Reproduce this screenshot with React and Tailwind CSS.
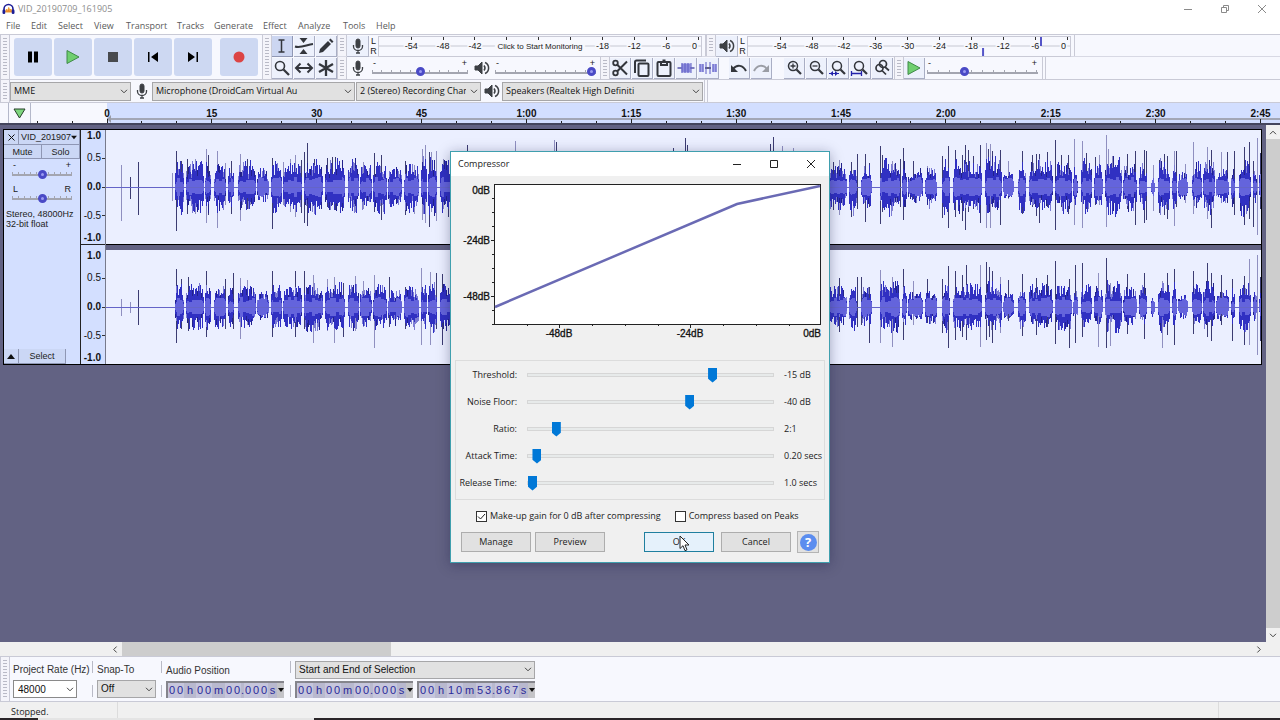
import React from "react";

const MENUS = [
  ["File", "w-[25px]"], ["Edit", "w-[27px]"], ["Select", "w-[36px]"], ["View", "w-[32px]"],
  ["Transport", "w-[51px]"], ["Tracks", "w-[37px]"], ["Generate", "w-[49px]"], ["Effect", "w-[35px]"],
  ["Analyze", "w-[45px]"], ["Tools", "w-[33px]"], ["Help", "w-[30px]"],
];

/* ---------- waveform data ---------- */

// [start, end, height above the axis, height below the axis]
const BURSTS = [
  [175, 184, 24, 25], [186, 204, 24, 25], [205, 211, 28, 27], [214, 226, 22, 24], [228, 234, 22, 22],
  [238, 256, 24, 22], [257, 269, 17, 14], [271, 282, 23, 24], [283, 302, 22, 23], [304, 323, 25, 26],
  [325, 345, 26, 24], [348, 359, 26, 24], [360, 372, 22, 22], [373, 387, 24, 24], [388, 402, 18, 19],
  [404, 419, 22, 25], [421, 427, 28, 26], [428, 437, 28, 28], [440, 456, 25, 26], [460, 490, 25, 24],
  [494, 530, 25, 24], [534, 570, 25, 24], [576, 620, 25, 24], [626, 700, 25, 24], [706, 760, 25, 24],
  [765, 820, 25, 24], [824, 847, 22, 21], [849, 857, 24, 26], [861, 872, 21, 20], [880, 900, 28, 27],
  [902, 907, 25, 22], [908, 923, 17, 15], [925, 937, 17, 20], [942, 950, 26, 27], [953, 982, 25, 25],
  [985, 1002, 28, 24], [1003, 1014, 15, 13], [1018, 1026, 23, 24], [1029, 1053, 25, 22],
  [1055, 1072, 24, 25], [1073, 1078, 20, 16], [1081, 1092, 27, 24], [1094, 1103, 22, 18],
  [1105, 1122, 28, 27], [1123, 1137, 21, 22], [1139, 1147, 22, 22], [1151, 1155, 12, 12],
  [1158, 1170, 26, 27], [1172, 1177, 26, 22], [1178, 1188, 14, 14], [1192, 1202, 25, 19],
  [1203, 1215, 28, 26], [1216, 1229, 17, 15], [1231, 1235, 22, 20], [1239, 1251, 25, 28],
  [1253, 1257, 20, 18], [1259, 1262, 20, 18],
];

// [x, up, down]
const PEAKS_LEFT = [
  [121, 22, 34], [130, 10, 12], [138, 25, 28], [172, 14, 14], [176, 36, 44], [181, 26, 20], [187, 28, 27],
  [195, 28, 27], [206, 38, 36], [208, 32, 28], [217, 36, 41], [225, 24, 18], [231, 26, 27], [240, 33, 34],
  [247, 28, 22], [250, 25, 18], [272, 29, 42], [283, 25, 18], [290, 28, 25], [295, 32, 30], [301, 27, 26],
  [304, 35, 36], [307, 44, 39], [314, 28, 27], [327, 29, 20], [332, 30, 18], [335, 30, 23], [355, 28, 25],
  [363, 25, 22], [374, 34, 25], [381, 32, 33], [405, 26, 28], [414, 22, 27], [422, 38, 33], [425, 42, 36],
  [429, 35, 40], [431, 35, 25], [436, 36, 34], [443, 28, 22], [448, 27, 30], [467, 42, 20], [515, 46, 20],
  [554, 47, 20], [556, 45, 20], [673, 39, 20], [685, 49, 20], [687, 42, 20], [770, 43, 20], [773, 50, 20],
  [782, 41, 20], [793, 39, 20], [833, 25, 23], [839, 27, 28], [851, 25, 30], [857, 33, 22], [865, 33, 35],
  [869, 24, 20], [880, 41, 37], [882, 32, 25], [892, 26, 24], [900, 28, 20], [903, 39, 33], [913, 26, 12],
  [927, 21, 18], [942, 31, 31], [948, 41, 41], [955, 37, 30], [962, 32, 34], [965, 42, 43], [968, 37, 25],
  [973, 31, 22], [980, 42, 36], [986, 44, 41], [988, 38, 22], [990, 43, 41], [992, 36, 20], [1000, 37, 38],
  [1008, 26, 12], [1022, 36, 27], [1032, 32, 20], [1036, 33, 29], [1039, 33, 36], [1047, 35, 20],
  [1055, 47, 43], [1061, 32, 20], [1068, 32, 27], [1074, 48, 38], [1082, 46, 41], [1086, 34, 22],
  [1095, 30, 18], [1099, 32, 18], [1106, 52, 40], [1108, 38, 25], [1112, 31, 26], [1127, 33, 22],
  [1135, 36, 38], [1144, 37, 36], [1146, 36, 33], [1153, 22, 24], [1159, 27, 26], [1164, 33, 28],
  [1167, 31, 32], [1174, 36, 39], [1176, 36, 20], [1185, 23, 16], [1193, 45, 27], [1207, 40, 32],
  [1211, 37, 41], [1221, 35, 12], [1227, 35, 16], [1234, 36, 28], [1244, 40, 38], [1249, 45, 32],
  [1253, 26, 40], [1257, 49, 48], [1260, 34, 22],
];

const PEAKS_RIGHT = [
  [121, 8, 9], [130, 5, 6], [138, 17, 18], [176, 38, 36], [181, 28, 22], [188, 30, 24], [206, 36, 30],
  [225, 28, 22], [233, 34, 22], [240, 29, 32], [247, 27, 18], [272, 36, 30], [295, 36, 30], [304, 36, 22],
  [313, 32, 36], [327, 28, 24], [334, 30, 36], [343, 24, 30], [355, 31, 24], [363, 26, 20], [374, 32, 41],
  [389, 30, 20], [405, 20, 22], [421, 39, 38], [430, 35, 38], [436, 34, 22], [442, 33, 38], [839, 29, 25],
  [857, 30, 20], [861, 30, 18], [869, 20, 36], [880, 37, 36], [892, 30, 40], [903, 38, 33], [913, 26, 18],
  [927, 28, 16], [942, 28, 26], [948, 41, 41], [955, 36, 33], [962, 32, 30], [966, 42, 33], [980, 42, 40],
  [986, 45, 33], [989, 40, 30], [992, 36, 36], [1000, 30, 26], [1008, 27, 14], [1022, 33, 29],
  [1036, 29, 28], [1047, 32, 20], [1055, 46, 37], [1069, 28, 41], [1075, 42, 36], [1082, 44, 30],
  [1098, 34, 40], [1106, 49, 41], [1110, 24, 39], [1127, 33, 27], [1144, 34, 32], [1162, 26, 41],
  [1167, 34, 28], [1174, 38, 38], [1193, 36, 27], [1207, 44, 30], [1211, 34, 34], [1221, 32, 18],
  [1232, 28, 34], [1244, 31, 38], [1249, 48, 38], [1257, 52, 48], [1260, 30, 34],
];

function noise(n) {
  const v = Math.sin(n * 12.9898) * 43758.5453;
  return v - Math.floor(v);
}

function buildWave(peaks, seed, gain) {
  const layers = { body: "", navy: "", pale: "", core: "", peak: "", peakPale: "" };
  const bar = (x, up, down) => `M${x}.5 ${57 - Math.round(up)}V${57 + Math.round(down)}`;
  BURSTS.forEach(([a, b, up, down]) => {
    for (let x = a; x < b; x += 1) {
      const edge = Math.min(1, 0.6 + Math.min(x - a, b - 1 - x) * 0.3);
      const u = up * gain * edge * (0.5 + 0.62 * noise(x * 1.7 + seed));
      const d = down * gain * edge * (0.5 + 0.62 * noise(x * 2.3 + seed + 9));
      const pick = noise(x * 3.1 + seed + 4);
      layers[pick < 0.66 ? "body" : pick < 0.8 ? "navy" : "pale"] += bar(x, u, d);
      if (pick >= 0.66) layers.body += bar(x, u * 0.66, d * 0.66);
      const c = edge * (5 + 5 * noise(Math.floor(x / 3) + seed));
      layers.core += bar(x, Math.min(c, u), Math.min(c, d));
    }
  });
  peaks.forEach(([x, up, down], i) => {
    layers[noise(i + seed) < 0.55 ? "peak" : "peakPale"] += bar(x, up, down);
  });
  return layers;
}

const CHANNELS = [buildWave(PEAKS_LEFT, 3, 1), buildWave(PEAKS_RIGHT, 21, 0.88)];

function Wave({ data, label }) {
  return (
    <svg viewBox="106 0 1155 114" preserveAspectRatio="none" className="block h-[114px] w-full bg-[#ebefff]" role="img" aria-label={label} fill="none" shapeRendering="crispEdges">
      <path d={data.peakPale} stroke="#8f8fc0" />
      <path d={data.peak} stroke="#3c3c72" />
      <path d={data.pale} stroke="#7c7cd4" />
      <path d={data.navy} stroke="#22228c" />
      <path d={data.body} stroke="#3030c2" />
      <path d={data.core} stroke="#6464dc" />
      <path d="M105 57.500H1262" stroke="#6464c8" />
    </svg>
  );
}

/* ---------- icons ---------- */

const Mic = () => (
  <svg viewBox="0 0 12 16" className="h-4 w-3 shrink-0" fill="none" stroke="#3d4045">
    <rect x="4" y="1" width="4" height="9" rx="2" fill="#3d4045" />
    <path d="M1.500 7v1.500a4.500 4 0 0 0 9 0V7M6 12.500v2.500M4 15h4" strokeWidth="1.300" />
  </svg>
);
const Speaker = () => (
  <svg viewBox="0 0 16 14" className="h-[14px] w-4 shrink-0" fill="none" stroke="#3d4045">
    <path d="M1 5h3l4-4v12L4 9H1z" fill="#3d4045" />
    <path d="M10 4.500a4 4 0 0 1 0 5M11 1.500a6 6 0 0 1 0 11" strokeWidth="1.500" />
  </svg>
);
const Chevron = ({ className = "" }) => (
  <svg viewBox="0 0 8 5" className={`h-[5px] w-2 shrink-0 ${className}`} fill="none" stroke="#444">
    <path d="M1 .8l3 3 3-3" />
  </svg>
);
const I = ({ children }) => (
  <svg viewBox="0 0 20 20" className="size-5 shrink-0" fill="none" stroke="#33363c" strokeWidth="2">{children}</svg>
);
const Play = () => <path d="M4 3.500v13L16 10z" fill="#6fcf6f" stroke="#3f8a48" strokeWidth="1" />;
const lens = (
  <>
    <circle cx="9" cy="8" r="4.500" strokeWidth="1.500" />
    <path d="M12.500 11.500L17 16" strokeWidth="2.200" />
  </>
);

const EDIT_TOOLS = [
  ["Cut", <><circle cx="5.500" cy="5" r="2.300" strokeWidth="1.800" /><circle cx="5.500" cy="15" r="2.300" strokeWidth="1.800" /><path d="M7 6.500L17 16.500M7 13.500L17 3.500" /></>],
  ["Copy", <><path d="M14 2.500H4.500A1.500 1.500 0 0 0 3 4v11" /><rect x="6.500" y="5.500" width="10" height="12.500" rx="1" /></>],
  ["Paste", <><rect x="3.500" y="4" width="13" height="14" rx="1" /><path d="M7 4h6v3H7zM8.500 2.500h3" /></>],
  ["Trim audio", <g><path d="M1.500 10h17" stroke="#55a" strokeWidth="1.500" /><rect x="5.500" y="5.500" width="9" height="9" fill="#8c8cdc" stroke="none" /><path d="M6 5v10M9 5v10M12 5v10M15 5v10" stroke="#5a5ac4" strokeWidth="1" /></g>],
  ["Silence audio", <g><path d="M7 10h6" stroke="#335" strokeWidth="1.500" /><path d="M1.500 6h4v8h-4zM14.500 6h4v8h-4z" fill="#a4a4e6" stroke="none" /><path d="M2 6v8M5 6v8M8 4v12M12 4v12M15 6v8M18 6v8" stroke="#5a5ac4" strokeWidth="1" /></g>],
];
const HISTORY_TOOLS = [
  ["Undo", <><path d="M4 11c4-5 10-4 13 2" /><path d="M2 7v7h7z" fill="#33363c" stroke="none" /></>],
  ["Redo", <g stroke="#9a9da5"><path d="M16 11c-4-5-10-4-13 2" /><path d="M18 7v7h-7z" fill="#9a9da5" stroke="none" /></g>],
];
const ZOOM_TOOLS = [
  ["Zoom in", <>{lens}<path d="M6.500 8h5M9 5.500v5" strokeWidth="1.300" /></>],
  ["Zoom out", <>{lens}<path d="M6.500 8h5" strokeWidth="1.300" /></>],
  ["Fit selection", <>{lens}<path d="M1 15.500h10" stroke="#22a" strokeWidth="1" /><path d="M5 13v5l-3-2.500zM7 13v5l3-2.500z" fill="#22a" stroke="none" /></>],
  ["Fit project", <>{lens}<path d="M1.500 13v5M11.500 13v5M2 15.500h9" stroke="#22a" strokeWidth="1.300" /></>],
  ["Zoom toggle", <g strokeWidth="1.700"><circle cx="11" cy="6" r="3.500" /><circle cx="7.500" cy="10" r="3.500" /><path d="M13 9l4 3.500M10 12.500l4 4" /></g>],
];
const MODE_TOOLS = [
  ["Selection tool", <path d="M6.500 4h6M9.500 4v12M6.500 16h6" strokeWidth="1.500" />],
  ["Envelope tool", <><path d="M1 10.500c6 2 12-2 18-2.500" strokeWidth="2" /><path d="M5.500 2h8L9.500 7zM5.500 18h8L9.500 13z" fill="#33363c" stroke="none" /></>],
  ["Draw tool", <path d="M3 17l1-4 8-8 3 3-8 8zM13 4l1.500-1.500 3 3L16 7z" fill="#33363c" stroke="none" />],
  ["Zoom tool", <><circle cx="8" cy="8" r="4.500" strokeWidth="1.600" /><path d="M11.500 11.500L17 17" strokeWidth="2.300" /></>],
  ["Time shift tool", <path d="M2 10h16M6.500 5.500L2 10l4.500 4.500M13.500 5.500L18 10l-4.500 4.500" />],
  ["Multi tool", <path d="M10 2v16M3 6l14 8M17 6L3 14" strokeWidth="2.300" />],
];
const TRANSPORT = [
  ["Pause", <path d="M5 4.500h4v11H5zM11 4.500h4v11h-4z" fill="#000" stroke="none" />],
  ["Play", <Play />],
  ["Stop", <path d="M5 5h10v10H5z" fill="#484a4e" stroke="none" />],
  ["Skip to start", <path d="M5 5h1.500v10H5zM15 5v10l-7-5z" fill="#000" stroke="none" />],
  ["Skip to end", <path d="M13.500 5H15v10h-1.500zM5 5v10l7-5z" fill="#000" stroke="none" />],
  ["Record", <circle cx="10" cy="10" r="5.500" fill="#dc4444" stroke="none" />],
];

/* ---------- small parts ---------- */

const Grip = () => (
  <div className="flex w-[10px] shrink-0 items-center justify-center self-stretch border-r border-l border-[#c9cad6] bg-[#f4f4fa] py-[3px]">
    <div className="h-full w-1 bg-[repeating-linear-gradient(to_bottom,#b9bac6_0px,#b9bac6_1px,transparent_1px,transparent_3px)]" />
  </div>
);

function ToolButton({ label, pressed, children }) {
  return (
    <button
      type="button"
      aria-label={label}
      className={`flex h-[21px] w-[21px] shrink-0 items-center justify-center border-r border-b ${pressed ? "border-[#8f97b4] bg-[#ccd6f1]" : "border-[#a9aec4] bg-[#edf1fc]"}`}
    >
      <I>{children}</I>
    </button>
  );
}

const ToolGroup = ({ tools }) => (
  <div className="flex gap-px pr-px">
    {tools.map(([n, d]) => <ToolButton key={n} label={n}>{d}</ToolButton>)}
  </div>
);

function Select({ label, value, className }) {
  return (
    <div className={`grid items-center ${className}`}>
      <select aria-label={label} className="col-start-1 row-start-1 h-full w-full min-w-0 appearance-none overflow-hidden border border-[#a6a6a8] bg-[#e1e1e1] pr-[14px] pl-[3px] text-[#111] outline-none">
        <option>{value}</option>
      </select>
      <Chevron className="pointer-events-none col-start-1 row-start-1 mr-[3px] justify-self-end" />
    </div>
  );
}

const KNOB =
  "[&::-webkit-slider-thumb]:size-[9px] [&::-webkit-slider-thumb]:appearance-none [&::-webkit-slider-thumb]:rounded-full [&::-webkit-slider-thumb]:border-[3px] [&::-webkit-slider-thumb]:border-[#4a4ac6] [&::-webkit-slider-thumb]:bg-[#9a9af0]";

function MiniSlider({ label, value, low = "-", high = "+", className }) {
  return (
    <div className={`flex shrink-0 flex-col ${className}`}>
      <div className="flex h-[7px] justify-between px-px font-['Liberation_Sans',sans-serif] text-[9px] leading-[7px] text-[#222]">
        <span>{low}</span>
        <span>{high}</span>
      </div>
      <div className="grid items-center">
        <svg className="col-start-1 row-start-1 h-[10px] w-full" stroke="#a3a5b0" shapeRendering="crispEdges">
          <line x1="0" y1="6" x2="100%" y2="6" strokeWidth="2" />
          {[0, 10, 20, 30, 40, 50, 60, 70, 80, 90, 99].map((p) => (
            <line key={p} x1={`${p}%`} x2={`${p}%`} y1="3" y2="5" />
          ))}
        </svg>
        <input type="range" aria-label={label} min="0" max="100" defaultValue={value} className={`col-start-1 row-start-1 h-[9px] w-full appearance-none bg-transparent ${KNOB}`} />
      </div>
    </div>
  );
}

function Meter({ icon, label, hint, marks, className }) {
  const steps = ["-54", "-48", "-42", "-36", "-30", "-24", "-18", "-12", "-6", "0"];
  return (
    <div className={`flex h-[22px] shrink-0 items-center ${className}`}>
      <button type="button" aria-label={label} className="flex h-[21px] w-[22px] shrink-0 items-center justify-center border-r border-b border-[#b4b8ca] bg-[#edf1fc]">{icon}</button>
      <div className="flex w-[9px] shrink-0 flex-col items-center font-['Liberation_Sans',sans-serif] text-[9px] leading-[10px] text-[#222]">
        <span>L</span>
        <span>R</span>
      </div>
      <svg className="h-[21px] min-w-0 flex-1 border border-[#c9cad6] font-['Liberation_Sans',sans-serif] text-[9px]" role="img" aria-label={`${label} level`}>
        <line x1="0" y1="9" x2="100%" y2="9" stroke="#c6c8d2" />
        {steps.map((s, i) => {
          const x = `${10 + i * 9.9}%`;
          const hidden = hint && i > 2 && i < 6;
          return (
            <g key={s}>
              <line x1={x} x2={x} y1="0" y2="3" stroke="#333" shapeRendering="crispEdges" />
              {!hidden && (
                <text x={i === 9 ? "98%" : x} y="12" textAnchor="middle" fill="#222" stroke="#f7f8fd" strokeWidth="3" paintOrder="stroke">{s}</text>
              )}
            </g>
          );
        })}
        {hint && <text x="50%" y="12" textAnchor="middle" className="text-[8px]" fill="#222" stroke="#f7f8fd" strokeWidth="6" paintOrder="stroke">{hint}</text>}
        {marks && (
          <>
            <line x1="91%" x2="91%" y1="0" y2="9" stroke="#5555c8" strokeWidth="2" />
            <line x1="73%" x2="73%" y1="11" y2="20" stroke="#5555c8" strokeWidth="2" />
          </>
        )}
      </svg>
    </div>
  );
}

function TimeBox({ label, value }) {
  const width = (c, i) => {
    if (c === "h") return "w-3";
    if (c === "m") return "w-[13px]";
    if (c === ".") return "w-[3px]";
    return i === 12 ? "w-[9px]" : "w-2";
  };
  return (
    <div role="group" aria-label={label} className="flex h-[17px] w-[118px] items-stretch border-t-2 border-l-2 border-[#85858c] bg-[#c4c4c8] font-['Liberation_Sans',sans-serif] text-[11px] leading-[14px] text-[#2a2a9a]">
      {value.split("").map((c, i) => (
        <span key={i} className={`text-center ${width(c, i)} ${/\d/.test(c) ? "bg-[#c6c6dc]" : "bg-[#b9b9cf]"}`}>{c}</span>
      ))}
      <button type="button" aria-label={`${label} format`} className="flex flex-1 items-center justify-center">
        <svg viewBox="0 0 6 4" className="h-1 w-[6px]"><path d="M0 0h6L3 4z" fill="#111" /></svg>
      </button>
    </div>
  );
}

/* ---------- page sections ---------- */

function TitleBar() {
  return (
    <header className="bg-white">
      <div className="flex h-[18px] items-center pl-[2px] text-[#8d8d8d]">
        <svg viewBox="0 0 13 12" className="mr-[3px] h-3 w-[13px]" fill="none">
          <path d="M2 9V6a4.500 4.500 0 0 1 9 0v3" stroke="#1d1d96" strokeWidth="1.600" />
          <path d="M3.500 9l1-3 1.200 2 1-3.500 1.200 3.500 1-2 1 3z" fill="#e9742a" stroke="#f0a030" />
          <rect x=".5" y="6.500" width="2.800" height="4.500" rx="1.200" fill="#1d1d96" />
          <rect x="9.700" y="6.500" width="2.800" height="4.500" rx="1.200" fill="#1d1d96" />
        </svg>
        <h1>VID_20190709_161905</h1>
        <div className="ml-auto flex">
          {[["Minimize", "M1 5.500h8"], ["Restore", "M1.500 3.500h5v5h-5zM3.500 3.500v-2h5v5h-2"], ["Close", "M1 1l8 8M9 1L1 9"]].map(([n, d]) => (
            <button key={n} type="button" aria-label={n} className="flex w-[37px] items-center justify-center">
              <svg viewBox="0 0 10 10" className="size-[10px]" fill="none" stroke="#8a8a8a"><path d={d} /></svg>
            </button>
          ))}
        </div>
      </div>
      <nav className="flex h-4 items-center pl-[6px] leading-[14px] text-[#5a5a5a]">
        {MENUS.map(([m, w]) => (
          <button key={m} type="button" className={`text-left ${w}`}>{m}</button>
        ))}
      </nav>
    </header>
  );
}

function Toolbars() {
  return (
    <div className="flex h-[45px] border-t border-[#c9cad6]">
      <Grip />
      <div className="flex items-center gap-[2px] pr-1 pl-1">
        {TRANSPORT.map(([n, d], i) => (
          <button key={n} type="button" aria-label={n} className={`flex size-[38px] items-center justify-center rounded-[3px] bg-[#cdd8f2] ${i === 5 ? "ml-[6px]" : ""}`}>
            <I>{d}</I>
          </button>
        ))}
      </div>
      <Grip />
      <div className="grid grid-cols-3 content-center gap-px">
        {MODE_TOOLS.map(([n, d], i) => (
          <ToolButton key={n} label={n} pressed={i === 0}>{d}</ToolButton>
        ))}
      </div>
      <div className="flex min-w-0 flex-1 flex-col">
        <div className="flex h-[22px] border-b border-[#d8d9e4]">
          <Grip />
          <Meter icon={<Mic />} label="Recording meter" hint="Click to Start Monitoring" className="w-[355px]" />
          <div className="w-1 border-r border-[#c9cad6]" />
          <Grip />
          <Meter icon={<Speaker />} label="Playback meter" marks className="w-[355px]" />
          <div className="w-1 border-r border-[#c9cad6]" />
        </div>
        <div className="flex h-[22px] items-center">
          <Grip />
          <div className="flex w-[22px] justify-center"><Mic /></div>
          <MiniSlider label="Recording volume" value={51} className="ml-[3px] w-[96px]" />
          <div className="flex w-[27px] justify-center"><Speaker /></div>
          <MiniSlider label="Playback volume" value={100} className="w-[101px]" />
          <div className="w-1" />
          <Grip />
          <ToolGroup tools={EDIT_TOOLS} />
          <div className="w-[9px]" />
          <ToolGroup tools={HISTORY_TOOLS} />
          <div className="w-[11px]" />
          <ToolGroup tools={ZOOM_TOOLS} />
          <Grip />
          <ToolButton label="Play at speed"><Play /></ToolButton>
          <MiniSlider label="Playback speed" value={32} className="mr-1 ml-[2px] w-[111px]" />
          <div className="h-full w-1 border-r border-l border-[#c9cad6]" />
        </div>
      </div>
    </div>
  );
}

function DeviceBar() {
  return (
    <div className="flex h-6 items-center border-y border-[#c9cad6]">
      <Grip />
      <Select label="Audio host" value="MME" className="h-[19px] w-[121px]" />
      <div className="flex w-[21px] justify-center"><Mic /></div>
      <Select label="Recording device" value="Microphone (DroidCam Virtual Au" className="h-[19px] w-[203px]" />
      <Select label="Recording channels" value="2 (Stereo) Recording Chan" className="ml-px h-[19px] w-[125px]" />
      <div className="flex w-[21px] justify-center"><Speaker /></div>
      <Select label="Playback device" value="Speakers (Realtek High Definiti" className="h-[19px] w-[201px]" />
      <div className="ml-px h-full w-1 border-r border-l border-[#c9cad6]" />
    </div>
  );
}

function Timeline() {
  const labels = ["0", "15", "30", "45", "1:00", "1:15", "1:30", "1:45", "2:00", "2:15", "2:30", "2:45"];
  const ticks = Array.from({ length: 34 }, (_, i) => i);
  return (
    <div className="flex h-[22px] border-b-2 border-[#44455c]">
      <div className="w-2" />
      <button type="button" aria-label="Pin play head" className="flex w-[23px] items-center justify-center border-x border-[#b4b8ca]">
        <svg viewBox="0 0 13 11" className="h-[11px] w-[13px]"><path d="M1 1h11L6.500 10z" fill="#7ed67e" stroke="#26402a" /></svg>
      </button>
      <svg className="h-5 w-[76px]" stroke="#222" shapeRendering="crispEdges"><path d="M6.500 18v3M41.500 18v3" /></svg>
      <svg className="h-5 min-w-0 flex-1 overflow-visible bg-[#d2deff] font-['Liberation_Sans',sans-serif] text-[10px] font-bold" role="img" aria-label="Timeline">
        <rect x="0" y="15" width="100%" height="2" fill="#a2a6b6" />
        <path d="M0 16l4-4v8" fill="#9a9ca8" />
        {ticks.map((i) => {
          const x = `${i * 2.98}%`;
          return <line key={i} x1={x} x2={x} y1={i % 3 ? 18 : 16} y2="20" stroke="#222" shapeRendering="crispEdges" />;
        })}
        {labels.map((t, i) => (
          <text key={t} x={`${i * 8.94}%`} y="14" textAnchor="middle" fill="#111">{t}</text>
        ))}
      </svg>
    </div>
  );
}

function LevelRuler() {
  return (
    <div className="grid h-[114px] grid-rows-[12px_32px_26px_31px_13px] items-center text-[10px] leading-[12px] text-[#111]">
      {["1.0", "0.5", "0.0", "-0.5", "-1.0"].map((v) => (
        <div key={v} className="flex items-center justify-end gap-px">
          <span className={v.endsWith("5") ? "" : "font-bold"}>{v}</span>
          <i className={`h-px w-[3px] ${v.endsWith("1.0") ? "" : "bg-[#333]"}`} />
        </div>
      ))}
    </div>
  );
}

function Track() {
  const raised = "border-r border-b border-[#8f97b4] bg-[#cbd7f5]";
  return (
    <section aria-label="VID_20190709_161905" className="mt-1 mr-1 ml-[3px] flex h-[236px] border border-black bg-[#d3dfff]">
      <div className="flex w-[77px] shrink-0 flex-col border-r border-[#222] font-['Liberation_Sans',sans-serif] text-[9px] text-[#222]">
        <div className="flex h-[15px]">
          <button type="button" aria-label="Close track" className={`flex w-[15px] items-center justify-center ${raised}`}>
            <svg viewBox="0 0 7 7" className="size-[7px]" stroke="#111"><path d="M.5.5l6 6M6.500.5l-6 6" /></svg>
          </button>
          <button type="button" className={`flex min-w-0 flex-1 items-center justify-between px-[2px] ${raised}`}>
            VID_201907
            <svg viewBox="0 0 8 5" className="h-[5px] w-2"><path d="M0 0h8L4 5z" fill="#111" /></svg>
          </button>
        </div>
        <div className="grid h-[14px] grid-cols-2">
          <button type="button" className={raised}>Mute</button>
          <button type="button" className={raised}>Solo</button>
        </div>
        <div className="flex flex-col gap-[7px] px-2 pt-[3px]">
          <MiniSlider label="Gain" value={50} className="w-[60px]" />
          <MiniSlider label="Pan" value={50} low="L" high="R" className="w-[60px]" />
        </div>
        <p className="pt-[6px] pl-[2px] leading-[10px] whitespace-nowrap">Stereo, 48000Hz<br />32-bit float</p>
        <div className="mt-auto flex h-[15px]">
          <button type="button" aria-label="Collapse" className={`flex w-[15px] items-center justify-center ${raised}`}>
            <svg viewBox="0 0 8 5" className="h-[5px] w-2"><path d="M0 5h8L4 0z" fill="#111" /></svg>
          </button>
          <button type="button" className={`w-[47px] ${raised}`}>Select</button>
        </div>
      </div>
      <div className="flex w-6 shrink-0 flex-col justify-between font-['Liberation_Sans',sans-serif]">
        <div className="border-b border-[#222]"><LevelRuler /></div>
        <LevelRuler />
      </div>
      <div className="flex min-w-0 flex-1 flex-col justify-between border-l border-[#777a8c] bg-[#626283]">
        <div className="border-b border-black"><Wave data={CHANNELS[0]} label="Left channel" /></div>
        <Wave data={CHANNELS[1]} label="Right channel" />
      </div>
    </section>
  );
}

const PARAMS = [
  ["Threshold:", 76.3, "-15 dB"], ["Noise Floor:", 66.6, "-40 dB"], ["Ratio:", 10.1, "2:1"],
  ["Attack Time:", 1.9, "0.20 secs"], ["Release Time:", 0, "1.0 secs"],
];

function CheckBox({ label, checked }) {
  return (
    <label className="flex items-center gap-[3px]">
      <span className="grid items-center justify-items-center">
        <input type="checkbox" defaultChecked={checked} className="peer col-start-1 row-start-1 size-[11px] appearance-none border border-[#333] bg-white" />
        <svg viewBox="0 0 9 9" className="pointer-events-none invisible col-start-1 row-start-1 size-[9px] peer-checked:visible" fill="none" stroke="#222"><path d="M1 4.500l2.500 2.500L8 2" /></svg>
      </span>
      {label}
    </label>
  );
}

function CompressorDialog() {
  const btn = "h-5 w-[70px] border border-[#adadad] bg-[#e1e1e1]";
  return (
    <div role="dialog" aria-labelledby="dlg-title" className="absolute top-[151px] left-1/2 w-[380px] -translate-x-1/2 border border-[#3f9fae] bg-[#f0f0f0] pb-[9px] text-[#222] shadow-[0_2px_12px_rgba(20,20,60,0.35)]">
      <div className="flex h-6 items-center bg-white pl-[7px]">
        <h2 id="dlg-title">Compressor</h2>
        <div className="ml-auto flex">
          {[["Minimize", "M1 5.500h8"], ["Maximize", "M1.500 1.500h7v7h-7z"], ["Close", "M1 1l8 8M9 1L1 9"]].map(([n, d]) => (
            <button key={n} type="button" aria-label={n} className="flex w-[37px] items-center justify-center">
              <svg viewBox="0 0 10 10" className="size-[10px]" fill="none" stroke="#222"><path d={d} /></svg>
            </button>
          ))}
        </div>
      </div>
      <svg viewBox="0 0 378 184" className="block h-[184px] w-full font-['Liberation_Sans',sans-serif] text-[10px]" role="img" aria-label="Compression curve">
        <rect x="43.500" y="8.500" width="326" height="140" fill="#fff" stroke="#222" />
        <path d="M44 131L286 28L369 10" fill="none" stroke="#6a6ab4" strokeWidth="2.500" />
        <g stroke="#222" shapeRendering="crispEdges">
          {[22, 36, 50, 64, 78, 92, 106, 120, 134, 148].map((y) => <path key={y} d={`M${y === 64 || y === 120 ? 40 : 41} ${y}.5h3`} />)}
          {[76, 108, 141, 174, 207, 239, 272, 305, 338].map((x) => <path key={x} d={`M${x}.5 148v${x === 108 || x === 239 ? 4 : 2}`} />)}
        </g>
        <g fill="#111" stroke="#111" strokeWidth=".3">
          <g textAnchor="end"><text x="39" y="18">0dB</text><text x="39" y="68">-24dB</text><text x="39" y="124">-48dB</text><text x="370" y="161">0dB</text></g>
          <g textAnchor="middle"><text x="108" y="161">-48dB</text><text x="239" y="161">-24dB</text></g>
        </g>
      </svg>
      <div className="mx-1 flex flex-col border border-[#dcdcdc] pb-[3px]">
        {PARAMS.map(([name, v, out]) => (
          <div key={name} className="grid h-[27px] grid-cols-[61px_247px_1fr] items-center gap-x-[10px]">
            <label htmlFor={name} className="text-right whitespace-nowrap">{name}</label>
            <input
              id={name} type="range" min="0" max="100" step="0.1" defaultValue={v}
              className="h-[15px] w-full appearance-none bg-transparent [&::-webkit-slider-runnable-track]:h-1 [&::-webkit-slider-runnable-track]:border [&::-webkit-slider-runnable-track]:border-[#d6d6d6] [&::-webkit-slider-runnable-track]:bg-[#e7eaea] [&::-webkit-slider-thumb]:-mt-[6px] [&::-webkit-slider-thumb]:h-[15px] [&::-webkit-slider-thumb]:w-[9px] [&::-webkit-slider-thumb]:appearance-none [&::-webkit-slider-thumb]:bg-[#0078d7] [&::-webkit-slider-thumb]:[clip-path:polygon(0_0,100%_0,100%_75%,50%_100%,0_75%)]"
            />
            <output htmlFor={name} className="whitespace-nowrap">{out}</output>
          </div>
        ))}
      </div>
      <div className="flex gap-[14px] pt-[9px] pl-[25px] leading-[14px] whitespace-nowrap">
        <CheckBox label="Make-up gain for 0 dB after compressing" checked />
        <CheckBox label="Compress based on Peaks" />
      </div>
      <div className="flex items-center pt-2 pl-[10px]">
        <button type="button" className={btn}>Manage</button>
        <button type="button" className={`ml-1 ${btn}`}>Preview</button>
        <button type="button" className="relative ml-[39px] h-5 w-[70px] border border-[#1f7f9f] bg-[#e5f1fb]">
          OK
          <svg viewBox="0 0 11 17" className="absolute top-[2px] left-[34px] h-[17px] w-[11px]"><path d="M1 1v12.500l3-2.800 2 5 2-.9-2-4.800h4z" fill="#fff" stroke="#222" /></svg>
        </button>
        <button type="button" className={`ml-[7px] ${btn}`}>Cancel</button>
        <button type="button" aria-label="Help" className="ml-[6px] flex h-[22px] w-[22px] items-center justify-center border border-[#b4b4b4] bg-[#e1e1e1]">
          <span className="flex size-[17px] items-center justify-center rounded-full bg-[#5b8def] text-[13px] font-bold text-white">?</span>
        </button>
      </div>
    </div>
  );
}

function SelectionBar() {
  const sep = <div className="flex w-px flex-col justify-between self-stretch py-1"><i className="h-3 bg-[#b9bac6]" /><i className="h-3 bg-[#b9bac6]" /></div>;
  return (
    <div className="flex h-[46px] items-center border-y border-[#c9cad6] font-['Liberation_Sans',sans-serif] text-[10px] text-[#333]">
      <Grip />
      <div className="flex w-[82px] flex-col pl-[3px] leading-[20px] whitespace-nowrap">
        <label htmlFor="rate">Project Rate (Hz)</label>
        <div className="grid h-[18px] w-16 items-center">
          <input id="rate" defaultValue="48000" className="col-start-1 row-start-1 h-full w-full border border-[#8a8a8a] bg-white pl-1 text-[#111]" />
          <Chevron className="col-start-1 row-start-1 mr-[3px] justify-self-end" />
        </div>
      </div>
      {sep}
      <div className="flex w-[68px] flex-col pl-1 leading-[20px]">
        <span>Snap-To</span>
        <Select label="Snap-To" value="Off" className="h-[18px] w-[59px] leading-[14px]" />
      </div>
      {sep}
      <div className="flex w-[128px] flex-col pl-1 leading-[20px]">
        <span>Audio Position</span>
        <TimeBox label="Audio Position" value="00h00m00.000s" />
      </div>
      {sep}
      <div className="flex flex-col gap-[2px] pl-1">
        <Select label="Selection mode" value="Start and End of Selection" className="h-[18px] w-[240px]" />
        <div className="flex gap-1">
          <TimeBox label="Selection start" value="00h00m00.000s" />
          <TimeBox label="Selection end" value="00h10m53.867s" />
        </div>
      </div>
    </div>
  );
}

export default function App() {
  return (
    <div className="relative flex min-h-screen flex-col overflow-hidden bg-[#f7f8fe] font-['Open_Sans','Noto_Sans',sans-serif] text-[9px] leading-[12px]">
      <TitleBar />
      <Toolbars />
      <DeviceBar />
      <Timeline />
      <main className="flex flex-1 bg-[#626283]">
        <div className="min-w-0 flex-1"><Track /></div>
        <div className="flex w-[14px] flex-col items-center bg-[#f0f0f0]">
          <div className="flex h-[14px] items-center"><Chevron className="rotate-180" /></div>
          <div className="w-full flex-1 bg-[#cdcdcd]" />
          <div className="flex h-[14px] items-center"><Chevron /></div>
        </div>
      </main>
      <div className="flex h-[14px] items-center bg-[#f0f0f0] pl-[111px]">
        <Chevron className="rotate-90" />
        <div className="ml-[3px] h-full w-[269px] bg-[#cdcdcd]" />
        <Chevron className="mr-[17px] ml-auto -rotate-90" />
      </div>
      <SelectionBar />
      <footer className="flex h-4 items-stretch bg-[#f0f0f0] text-[#222]">
        <div className="w-[118px] border-r border-[#dcdcdc] pt-1 pl-[11px]">Stopped.</div>
        <div className="ml-auto w-[62px] border-l border-[#dcdcdc]" />
      </footer>
      <div className="flex h-[2px]">
        <div className="w-[38px] bg-[#2a2528]" />
        <div className="w-[276px] bg-[#e4e4e4]" />
        <div className="flex-1 bg-[#2a2528]" />
      </div>
      <CompressorDialog />
    </div>
  );
}
